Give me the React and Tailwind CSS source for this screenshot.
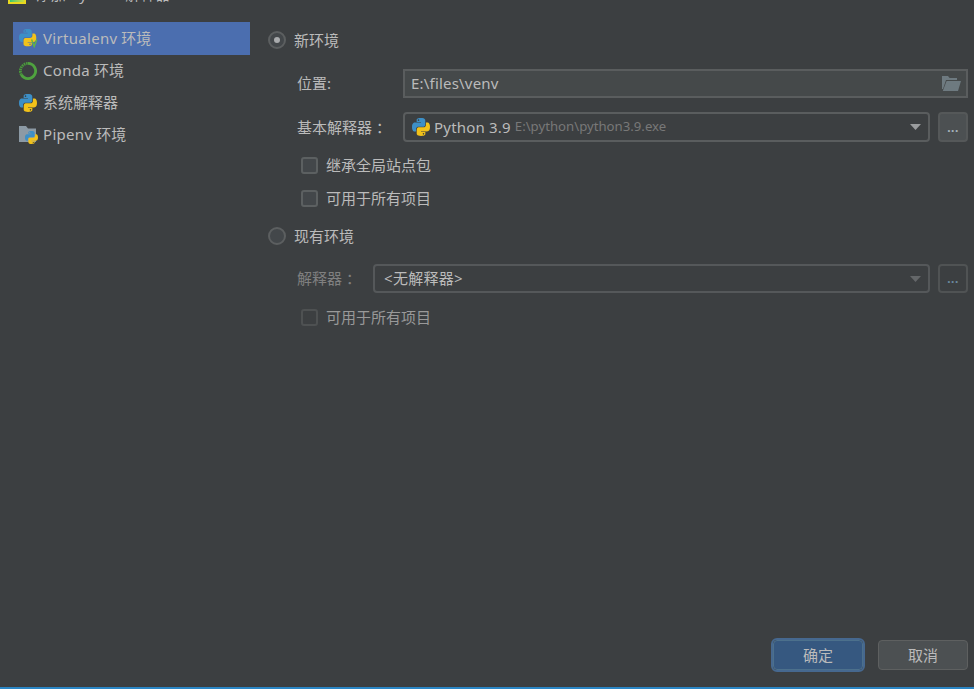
const FONT = "font-['Noto_Sans','Noto_Sans_CJK_SC',sans-serif]";

function PythonPaths() {
  return (
    <>
      <path fillRule="evenodd" fill="#3d8fc6" d="M11.9 0C5.8 0 6.2 2.6 6.2 2.6v2.7h5.8v.8H3.9S0 5.7 0 11.9s3.4 6 3.4 6h2v-2.9s-.1-3.4 3.3-3.4h5.8s3.2.1 3.2-3.1V3.2S18.2 0 11.9 0zM8.7 1.8a1 1 0 1 1 0 2.1 1 1 0 0 1 0-2.1z" />
      <path fillRule="evenodd" fill="#f2c21a" d="M12.1 24c6.1 0 5.7-2.6 5.7-2.6v-2.7H12v-.8h8.1s3.9.4 3.9-5.8-3.4-6-3.4-6h-2v2.9s.1 3.4-3.3 3.4H9.5s-3.2-.1-3.2 3.1v5.3S5.8 24 12.1 24zM15.3 22.2a1 1 0 1 1 0-2.1 1 1 0 0 1 0 2.1z" />
    </>
  );
}

function PythonIcon({ size = 18 }) {
  return (
    <svg width={size} height={size} viewBox="0 0 24 24" className="shrink-0">
      <PythonPaths />
    </svg>
  );
}

function VirtualenvIcon() {
  return (
    <svg width="19" height="19" viewBox="0 0 19 19" className="shrink-0">
      <g transform="scale(0.72)">
        <PythonPaths />
      </g>
      <path d="M12.6 10.5l2.6 7 2.6-7" fill="none" stroke="#62b543" strokeWidth="1.4" />
    </svg>
  );
}

function CondaIcon() {
  return (
    <svg width="18" height="18" viewBox="0 0 18 18" className="shrink-0">
      <path d="M9 1.4a7.6 7.6 0 1 1-6.6 11.4" fill="none" stroke="#4fa23f" strokeWidth="2.8" />
      <path d="M2.4 12.8A7.6 7.6 0 0 1 9 1.4" fill="none" stroke="#4a9a3c" strokeWidth="2.8" strokeDasharray="1.6 0.7" />
    </svg>
  );
}

function PipenvIcon() {
  return (
    <div className="relative w-[19px] h-[18px] shrink-0">
      <svg width="19" height="18" viewBox="0 0 19 18" className="block">
        <path d="M0 0h7l2 2.6H17V16H0z" fill="#8c9aa5" />
      </svg>
      <div className="absolute right-0 bottom-0">
        <PythonIcon size={13} />
      </div>
    </div>
  );
}

function FolderOpen() {
  return (
    <svg width="19" height="15" viewBox="0 0 19 15" className="shrink-0">
      <path d="M0 0h6l1.6 2H15v2H4L1 13H0z" fill="#6e7a80" />
      <path d="M4.6 5H19l-3 10H.8z" fill="#6e7a80" />
    </svg>
  );
}

function Caret({ color = "#9a9c9e" }) {
  return (
    <svg width="11" height="6" viewBox="0 0 11 6" className="shrink-0">
      <path d="M0 0h11L5.5 6z" fill={color} />
    </svg>
  );
}

function Radio({ selected }) {
  return (
    <span className="w-[18px] h-[18px] rounded-full border-2 border-[#5c5f60] bg-[#43474a] flex items-center justify-center shrink-0">
      {selected && <span className="w-[6px] h-[6px] rounded-full bg-[#a9abad]" />}
    </span>
  );
}

function Checkbox({ label, disabled, className }) {
  return (
    <div className={`flex items-center pl-[33px] h-[18px] ${className}`}>
      <span className={`w-[17px] h-[17px] rounded-[3px] border-2 shrink-0 ${disabled ? "border-[#4e5152]" : "border-[#5c6061] bg-[#43474a]"}`} />
      <span className={`ml-[8px] text-[15px] leading-none ${disabled ? "text-[#999999]" : "text-[#bbbbbb]"}`}>{label}</span>
    </div>
  );
}

function SideItem({ icon, label, suffix, selected, className }) {
  return (
    <div className={`h-[33px] flex items-center pl-[6px] text-[15px] ${selected ? "bg-[#4b6eaf]" : ""} ${className ?? ""}`}>
      <span className="w-[24px] flex">{icon}</span>
      <span className="text-[#bbbbbb] leading-none">
        <span className={suffix ? "tracking-[0.3px]" : ""}>{label}</span>
        {suffix && <span> {suffix}</span>}
      </span>
    </div>
  );
}

function DotsButton({ disabled }) {
  return (
    <div className={`w-[30px] h-full rounded-[4px] border-2 flex items-end justify-center pb-[8px] shrink-0 ${disabled ? "border-[#505354]" : "border-[#555859] bg-[#4c5052]"}`}>
      <span className={`text-[12px] font-bold leading-[8px] tracking-[0.5px] ${disabled ? "text-[#6c8ba0]" : "text-[#a8b4bd]"}`}>...</span>
    </div>
  );
}

function MainForm() {
  return (
    <div className="flex-1 ml-[18px] mr-[6px] pt-[27px] min-w-0 text-[15px] text-[#bbbbbb]">
      <div className="flex items-center h-[18px]">
        <Radio selected />
        <span className="ml-[8px] leading-none">新环境</span>
      </div>

      <div className="flex items-center h-[29px] mt-[20px]">
        <span className="w-[135px] pl-[29px] shrink-0 leading-none whitespace-nowrap">位置:</span>
        <div className="flex-1 h-full border-2 border-[#5a5d5e] bg-[#45494a] flex items-center justify-between pl-[6px] pr-[5px]">
          <span className="leading-none tracking-[0.2px]">E:\files\venv</span>
          <FolderOpen />
        </div>
      </div>

      <div className="flex items-center h-[30px] mt-[14px]">
        <span className="w-[135px] pl-[29px] shrink-0 leading-none whitespace-nowrap">基本解释器<span className="ml-[4px]">：</span></span>
        <div className="flex-1 h-full flex gap-[8px]">
          <div className="flex-1 border-2 border-[#5a5d5e] rounded-[4px] flex items-center pl-[7px] pr-[7px]">
            <PythonIcon size={18} />
            <span className="ml-[4px] leading-none tracking-[0.2px]">Python 3.9</span>
            <span className="ml-[4px] text-[13.2px] text-[#787878] leading-none">E:\python\python3.9.exe</span>
            <span className="ml-auto flex"><Caret /></span>
          </div>
          <DotsButton />
        </div>
      </div>

      <Checkbox className="mt-[14px]" label="继承全局站点包" />
      <Checkbox className="mt-[15px]" label="可用于所有项目" />

      <div className="flex items-center h-[18px] mt-[20px]">
        <Radio />
        <span className="ml-[8px] leading-none">现有环境</span>
      </div>

      <div className="flex items-center h-[29px] mt-[19px]">
        <span className="w-[105px] pl-[29px] shrink-0 leading-none whitespace-nowrap text-[#808080]">解释器<span className="ml-[4px]">：</span></span>
        <div className="flex-1 h-full flex gap-[8px]">
          <div className="flex-1 border-2 border-[#55585a] rounded-[4px] flex items-center pl-[9px] pr-[7px]">
            <span className="leading-none tracking-[0.3px]">&lt;无解释器&gt;</span>
            <span className="ml-auto flex"><Caret color="#646769" /></span>
          </div>
          <DotsButton disabled />
        </div>
      </div>

      <Checkbox disabled className="mt-[15px]" label="可用于所有项目" />
    </div>
  );
}

export default function App() {
  return (
    <div className={`w-[974px] h-[689px] bg-[#3c3f41] flex flex-col overflow-hidden ${FONT}`}>
      <div className="h-[4px] overflow-hidden flex items-end pl-[8px] shrink-0">
        <span className="w-[18px] h-[4px] border-x-2 border-b-2 border-x-[#e8d81f] border-b-[#e8d81f] bg-gradient-to-r from-[#2fc86e] to-[#c9dc3a] shrink-0" />
        <span className="ml-[10px] text-[15px] leading-[20px] h-[20px] translate-y-[-16px] text-[#bbbbbb] whitespace-nowrap self-start">添加 <span className="tracking-[0.3px]">Python</span> 解释器</span>
      </div>

      <div className="flex flex-1 min-h-0">
        <div className="w-[237px] ml-[13px] mt-[18px] shrink-0">
          <SideItem selected icon={<VirtualenvIcon />} label="Virtualenv" suffix="环境" />
          <SideItem className="-mt-[1px]" icon={<CondaIcon />} label="Conda" suffix="环境" />
          <SideItem className="-mt-[1px]" icon={<PythonIcon />} label="系统解释器" />
          <SideItem className="-mt-[1px]" icon={<PipenvIcon />} label="Pipenv" suffix="环境" />
        </div>
        <MainForm />
      </div>

      <div className="h-[47px] shrink-0 flex justify-end items-start pr-[6px] gap-[15px]">
        <button className="w-[90px] h-[30px] rounded-[4px] bg-[#365880] border border-[#4c708c] outline-2 outline-[#46688f] text-[15px] text-[#bbbbbb] leading-none">确定</button>
        <button className="w-[90px] h-[30px] rounded-[4px] bg-[#4c5052] border border-[#5e6060] text-[15px] text-[#bbbbbb] leading-none">取消</button>
      </div>
      <div className="h-[2px] bg-[#2b86c5] shrink-0" />
    </div>
  );
}
